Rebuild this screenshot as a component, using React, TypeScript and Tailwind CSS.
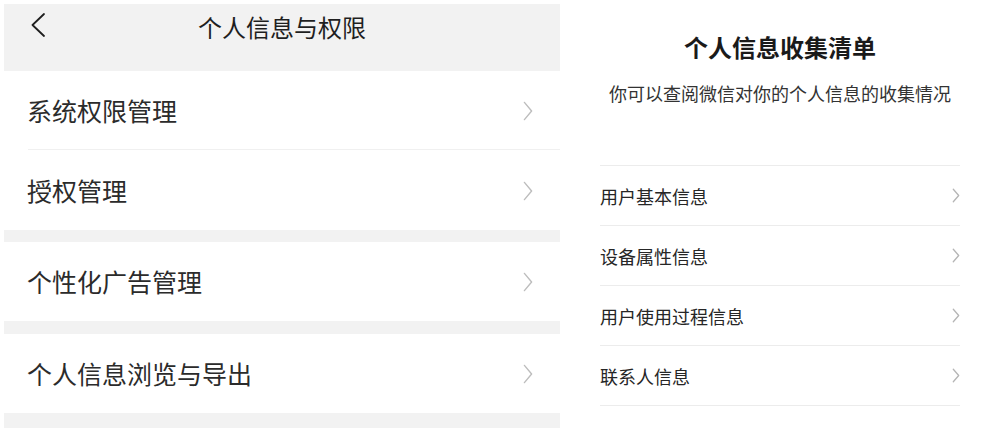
import React from "react";

const font = { fontFamily: '"Noto Sans CJK SC", "Noto Sans", sans-serif' };

function Chevron({ w, h, color, stroke }: { w: number; h: number; color: string; stroke: number }) {
  return (
    <svg width={w} height={h} viewBox={`0 0 ${w} ${h}`} fill="none">
      <polyline
        points={`${stroke},${stroke} ${w - stroke},${h / 2} ${stroke},${h - stroke}`}
        stroke={color}
        strokeWidth={stroke}
        strokeLinecap="round"
        strokeLinejoin="round"
      />
    </svg>
  );
}

function BackArrow() {
  return (
    <svg width="14" height="24" viewBox="0 0 14 24" fill="none">
      <polyline
        points="13,1 1.5,12 13,23"
        stroke="#1f1f1f"
        strokeWidth="1.8"
        strokeLinecap="round"
        strokeLinejoin="round"
      />
    </svg>
  );
}

function SettingRow({ label, divider }: { label: string; divider?: boolean }) {
  return (
    <div className="relative flex h-[79px] items-center bg-white pl-[23px] pr-[27px]">
      <span className="flex-1 text-[25px] leading-none text-[#2b2b2b]">{label}</span>
      <Chevron w={10} h={20} color="#bdbdbd" stroke={1.4} />
      {divider && <div className="absolute bottom-0 left-[24px] right-0 h-px bg-[#f0f0f0]" />}
    </div>
  );
}

function Band({ h }: { h: string }) {
  return <div className={`${h} bg-[#f2f2f2]`} />;
}

function ListRow({ label }: { label: string }) {
  return (
    <div className="flex h-[60px] items-center border-b border-[#ececec]">
      <span className="flex-1 text-[18px] leading-none text-[#262626]">{label}</span>
      <Chevron w={8} h={15} color="#b5b5b5" stroke={1.3} />
    </div>
  );
}

export default function App() {
  return (
    <div className="flex h-[433px] w-[1000px] overflow-hidden bg-white" style={font}>
      {/* permissions screen */}
      <div className="ml-[4px] mt-[4px] flex w-[556px] flex-col">
        <div className="relative flex h-[67px] items-start bg-[#f2f2f2]">
          <div className="absolute left-[27px] top-[9px]">
            <BackArrow />
          </div>
          <div className="w-full pt-[6px] text-center text-[24px] leading-[34px] text-[#1f1f1f]">
            个人信息与权限
          </div>
        </div>
        <SettingRow label="系统权限管理" divider />
        <div className="h-px bg-white" />
        <SettingRow label="授权管理" />
        <Band h="h-[12px]" />
        <SettingRow label="个性化广告管理" />
        <Band h="h-[13px]" />
        <SettingRow label="个人信息浏览与导出" />
        <Band h="h-[15px]" />
      </div>

      {/* collection list screen */}
      <div className="flex flex-1 flex-col px-[40px]">
        <div className="mt-[31px] text-center text-[24px] font-bold leading-[32px] text-[#1a1a1a]">
          个人信息收集清单
        </div>
        <div className="mt-[17px] text-center text-[18px] leading-[26px] text-[#333333]">
          你可以查阅微信对你的个人信息的收集情况
        </div>
        <div className="mt-[59px] border-b border-[#ececec]" />
        <ListRow label="用户基本信息" />
        <ListRow label="设备属性信息" />
        <ListRow label="用户使用过程信息" />
        <ListRow label="联系人信息" />
      </div>
    </div>
  );
}
